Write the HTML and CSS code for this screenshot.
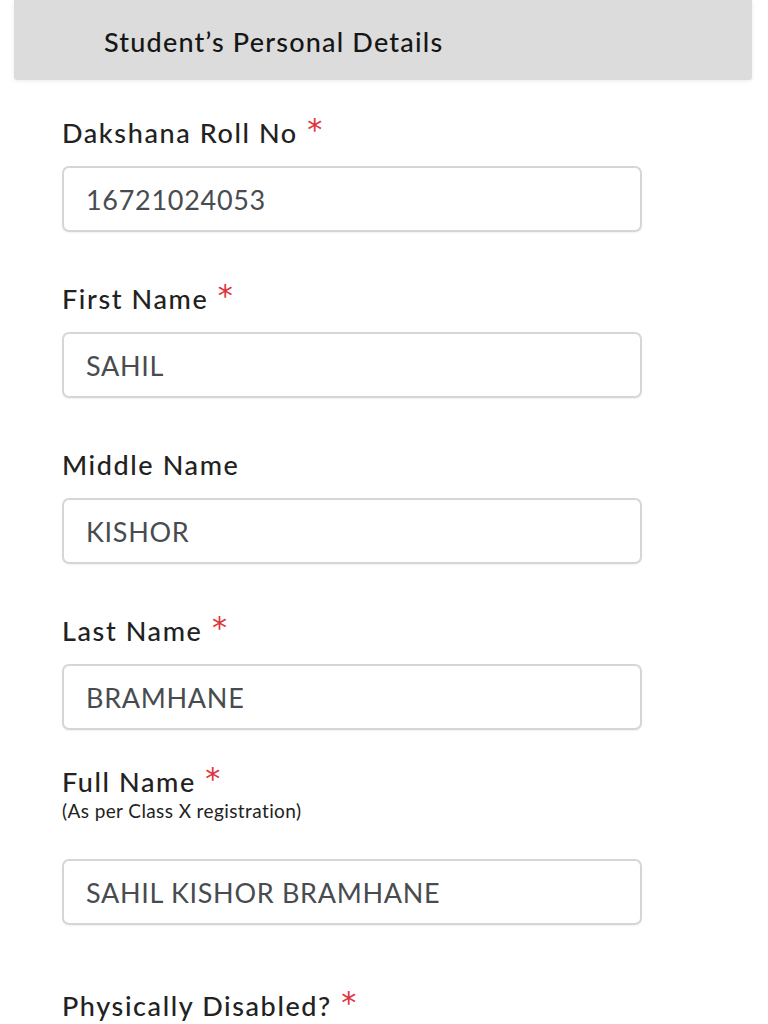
FILE: index.html
```html
<!DOCTYPE html>
<html>
<head>
<meta charset="utf-8">
<link rel="stylesheet" href="styles.css">
</head>
<body>
<div class="page">
  <div class="header"><h1 class="header-title">Student’s Personal Details</h1></div>
  <form class="form">
    <div class="field">
      <label class="label">Dakshana Roll No <span class="req">*</span></label>
      <div class="input">16721024053</div>
    </div>
    <div class="field">
      <label class="label">First Name <span class="req">*</span></label>
      <div class="input">SAHIL</div>
    </div>
    <div class="field">
      <label class="label">Middle Name</label>
      <div class="input">KISHOR</div>
    </div>
    <div class="field field-tight">
      <label class="label">Last Name <span class="req">*</span></label>
      <div class="input">BRAMHANE</div>
    </div>
    <div class="field field-wide">
      <label class="label">Full Name <span class="req">*</span></label>
      <div class="sublabel">(As per Class X registration)</div>
      <div class="input">SAHIL KISHOR BRAMHANE</div>
    </div>
    <div class="field">
      <label class="label">Physically Disabled? <span class="req">*</span></label>
    </div>
  </form>
</div>
</body>
</html>
```
FILE: styles.css
```css
html, body {
  margin: 0;
  padding: 0;
  background: #ffffff;
}
body {
  font-family: "Lato", "Noto Sans", sans-serif;
  color: #1f1f1f;
}
.page {
  width: 768px;
  height: 1024px;
  overflow: hidden;
}
.header {
  margin: 0 16px 0 14px;
  height: 80px;
  background: #dcdcdc;
  box-shadow: 0 1px 4px rgba(0,0,0,0.08);
  display: flex;
  align-items: center;
  padding-left: 90px;
  border-radius: 0 0 3px 3px;
}
.header-title {
  margin: 0;
  padding-top: 2px;
  font-size: 27px;
  font-weight: 500;
  color: #161616;
  letter-spacing: 1.2px;
}
.form {
  padding: 37px 0 0 62px;
  display: flex;
  flex-direction: column;
}
.field {
  display: flex;
  flex-direction: column;
  margin-bottom: 51px;
}
.field-tight {
  margin-bottom: 36px;
}
.field-wide {
  margin-bottom: 65px;
}
.label {
  display: block;
  height: 32px;
  font-size: 27px;
  line-height: 32px;
  font-weight: 500;
  color: #222;
  letter-spacing: 1.6px;
  margin-bottom: 17px;
}
.field-wide .label {
  margin-bottom: 0;
}
.req {
  display: inline-block;
  font-family: "DejaVu Sans", sans-serif;
  color: #e0343d;
  font-size: 30px;
  line-height: 20px;
  letter-spacing: 0;
  margin-left: 1px;
  vertical-align: 3px;
}
.sublabel {
  font-size: 19px;
  line-height: 26px;
  color: #222;
  letter-spacing: 0.4px;
  margin-bottom: 35px;
}
.input {
  box-sizing: border-box;
  width: 580px;
  height: 66px;
  border: 2px solid #d6d6d6;
  border-radius: 7px;
  padding-left: 22px;
  display: flex;
  align-items: center;
  font-size: 27px;
  letter-spacing: 0.7px;
  color: #484c50;
  box-shadow: 0 1px 2px rgba(0,0,0,0.06);
}
```
